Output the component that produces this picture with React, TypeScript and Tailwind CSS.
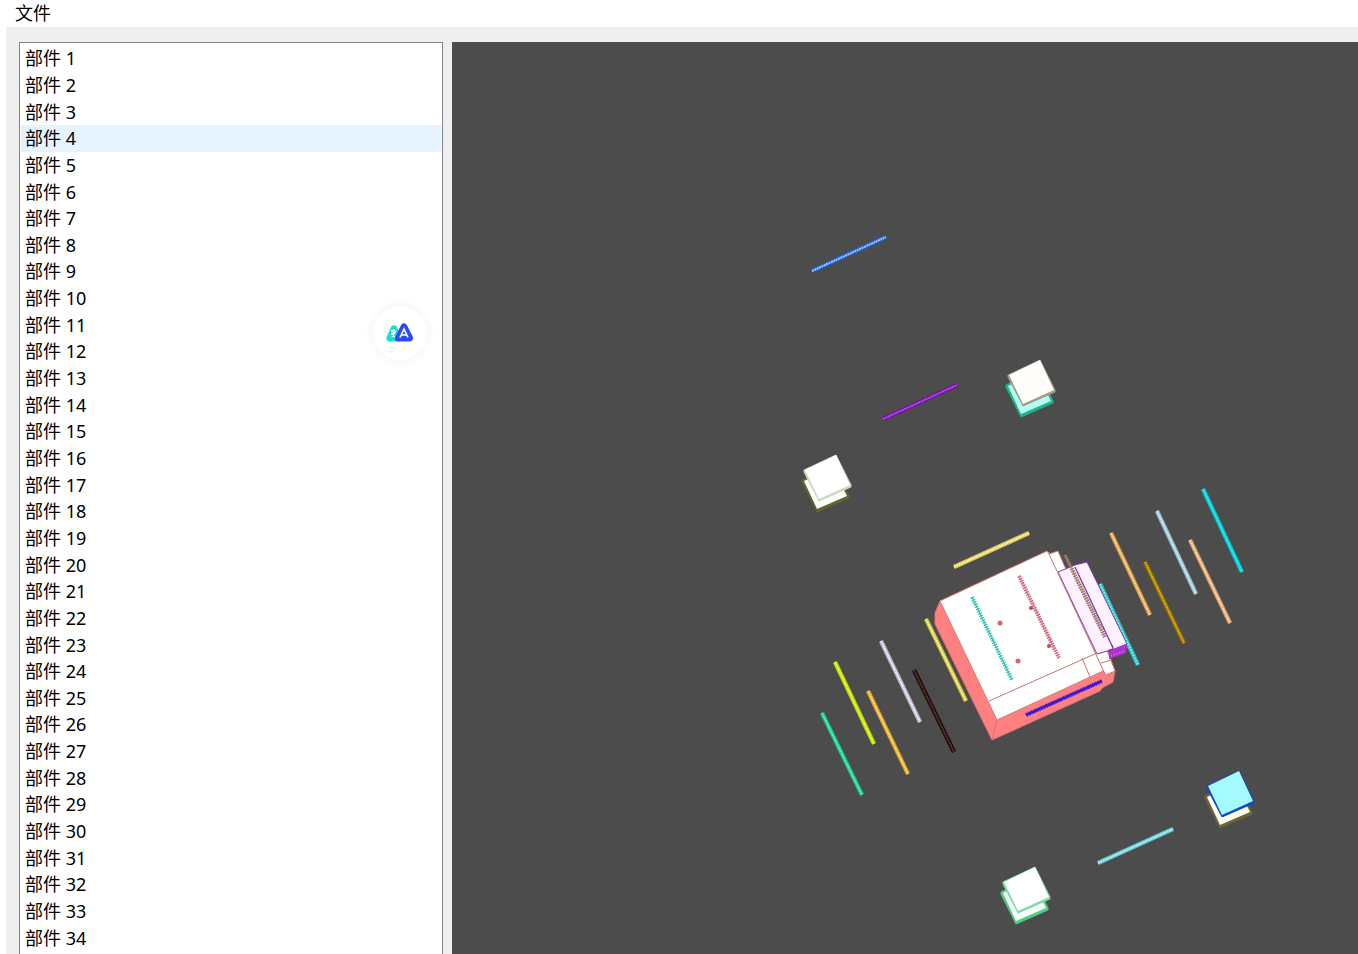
const parts = Array.from({ length: 34 }, (_, i) => `部件 ${i + 1}`);

// x1, y1, x2, y2, edge colour, inner colour
type RodData = [number, number, number, number, string, string];

const rods: RodData[] = [
  [812, 271, 886, 237, "#1f63d6", "#9cc9f5"],
  [883, 419, 957, 385, "#6d14a0", "#b94be6"],
  [954, 567, 1029, 533, "#d9c55c", "#f8f3a8"],
  [1098, 863, 1173, 829, "#5fc3cf", "#b0f2f5"],
  [926, 619, 966, 701, "#cdbb47", "#f7f491"],
  [881, 641, 920, 722, "#b9aec9", "#f1ecfa"],
  [914, 670, 954, 752, "#160806", "#5f352c"],
  [835, 662, 874, 744, "#b5d313", "#effa2f"],
  [868, 691, 908, 774, "#d79b32", "#ffdf62"],
  [822, 713, 862, 795, "#22ba87", "#48f7c2"],
  [1111, 533, 1150, 615, "#d69349", "#ffd88a"],
  [1145, 562, 1184, 643, "#8d6b05", "#e0ae16"],
  [1157, 511, 1196, 594, "#91bac9", "#cbeaf5"],
  [1190, 540, 1230, 623, "#d49768", "#ffdbae"],
  [1203, 489, 1242, 572, "#10bcc7", "#22f1fa"],
];

// x, y of the left corner, then top edge/fill and lower edge/fill
type BlockData = [number, number, string, string, string, string];

const blocks: BlockData[] = [
  [1008, 375, "#a29d87", "#fffdfb", "#20b58c", "#b3fff3"],
  [804, 470, "#cbd9c4", "#ffffff", "#62642b", "#fffffa"],
  [1207, 786, "#1047d2", "#a5fbff", "#686638", "#fffff0"],
  [1003, 882, "#83d9a6", "#ffffff", "#52ce84", "#f5fffa"],
];

function Rod({ rod }: { rod: RodData }) {
  const [x1, y1, x2, y2, edge, inner] = rod;
  const pos = { x1, y1, x2, y2 };
  return (
    <g>
      <line {...pos} stroke={edge} strokeWidth="4.4" />
      <line {...pos} stroke={inner} strokeWidth="2" strokeDasharray="2 0.6" />
    </g>
  );
}

function Block({ block }: { block: BlockData }) {
  const [x, y, topEdge, topFill, lowEdge, lowFill] = block;
  return (
    <g transform={`translate(${x} ${y})`} strokeLinejoin="round">
      <path d="M-2 10 L30 -5 L45 26 L45 28 L13 42 L12 40 L-2 12Z" fill={lowEdge} stroke={lowEdge} strokeWidth="1" />
      <path d="M0 11 L29 -3 L43 26 L13 39Z" fill={lowFill} />
      <path d="M0 0 L32 -15 L47 15 L47 17 L15 31 L0 2Z" fill={topEdge} stroke={topEdge} strokeWidth="1" />
      <path d="M1 0 L32 -15 L46 15 L15 29Z" fill={topFill} />
    </g>
  );
}

function Housing() {
  return (
    <g>
      <line x1="1100" y1="584" x2="1138" y2="665" stroke="#2cb9bb" strokeWidth="4.4" />
      <line x1="1100" y1="584" x2="1138" y2="665" stroke="#72f3ee" strokeWidth="2" strokeDasharray="2 1" />

      {/* body */}
      <path
        d="M940 601 L935 613 L935 624 L992 740 L1100 691 L1102 688 L1113 682 L1115 671 L1107 650 L1050 553 L1047 552Z"
        fill="#ff8080"
        stroke="#e07272"
        strokeWidth="1"
      />
      <path
        d="M940 601 L1047 551 L1049 554 L1058 551 L1064 565 L1107 650 L1115 671 L1106 675 L1103 671 L997 720Z"
        fill="#fff"
        stroke="#d77b78"
        strokeWidth="1"
      />
      <path d="M997 720 L992 740" stroke="#d96e6e" strokeWidth="1" />

      {/* side cover */}
      <path d="M1109 650 L1127 644 L1126 653 L1109 659Z" fill="#b530d2" />
      <path d="M1111 656 L1124 651" stroke="#efb4ff" strokeWidth="1" strokeDasharray="1 2" />
      <path
        d="M1058 572 L1075 565 L1087 562 L1127 644 L1114 649 L1097 654Z"
        fill="#fbf1ff"
        stroke="#8639ad"
        strokeWidth="1"
      />
      <path d="M1075 567 L1113 648" stroke="#7b359c" strokeWidth="1.3" />
      <path d="M1112 645 L1113 649 L1109 650" fill="none" stroke="#7b359c" strokeWidth="1" />

      {/* seams */}
      <g fill="none" stroke="#bd7772" strokeWidth="1">
        <path d="M1049 554 L1105 674" />
        <path d="M989 701 L1097 653" />
        <path d="M1082 658 L1090 677" />
        <path d="M1101 663 L1112 660" />
      </g>
      <path d="M1105 679 L1112 673" stroke="#b55353" strokeWidth="1" strokeDasharray="1 3" />

      {/* springs */}
      <g strokeWidth="4" strokeDasharray="1.5 1">
        <line x1="972" y1="597" x2="1012" y2="680" stroke="#3fc5b6" />
        <line x1="1019" y1="576" x2="1059" y2="658" stroke="#d3657e" />
        <line x1="1065" y1="555" x2="1105" y2="637" stroke="#946b5e" />
      </g>
      <g strokeWidth="1">
        <line x1="972" y1="597" x2="1012" y2="680" stroke="#2dbfae" />
        <line x1="1019" y1="576" x2="1059" y2="658" stroke="#d87f94" />
        <line x1="1065" y1="555" x2="1105" y2="637" stroke="#c4917e" />
      </g>
      <line x1="1026" y1="715" x2="1102" y2="681" stroke="#4c1fe0" strokeWidth="4" strokeDasharray="2 0.7" />
      <line x1="1026" y1="715" x2="1102" y2="681" stroke="#3b19c9" strokeWidth="2" />

      {/* holes */}
      <circle cx="1000" cy="623" r="2.5" fill="#d9646a" />
      <circle cx="1018" cy="661" r="2.5" fill="#d9646a" />
      <circle cx="1031" cy="608" r="2" fill="#c0485c" />
      <circle cx="1049" cy="646" r="2" fill="#c0485c" />
    </g>
  );
}

function Viewport() {
  return (
    <svg
      viewBox="452 42 906 912"
      preserveAspectRatio="xMinYMin slice"
      className="min-w-0 flex-1 bg-[#4c4c4c]"
      role="img"
    >
      {blocks.map((block, i) => (
        <Block key={i} block={block} />
      ))}
      {rods.map((rod, i) => (
        <Rod key={i} rod={rod} />
      ))}
      <Housing />
    </svg>
  );
}

function TranslateIcon() {
  return (
    <svg viewBox="0 0 28 20" className="h-5 w-7">
      <path d="M8 6 L12 15 L4 15Z" fill="#14e0d0" stroke="#14e0d0" strokeWidth="7" strokeLinejoin="round" />
      <path d="M5 8 L9 7 M5 11 L9 9 L6 14 M6 11 L9 14" fill="none" stroke="#fff" strokeWidth="1.3" />
      <path d="M18 4 L23.5 15 L12.5 15Z" fill="#2b48ff" stroke="#2b48ff" strokeWidth="7" strokeLinejoin="round" />
      <path d="M14 14.5 L18 6 L22 14.5 M15.5 12 H20.5" fill="none" stroke="#fff" strokeWidth="1.7" />
    </svg>
  );
}

export default function App() {
  return (
    <div className="flex min-h-screen flex-col bg-white font-['Noto_Sans','Noto_Sans_CJK_SC',sans-serif] text-[18px] text-black">
      <header className="flex h-[27px] items-start pl-[15px]">
        <button className="leading-[26px]">文件</button>
      </header>

      <main className="ml-1.5 flex flex-1 gap-[9px] bg-[#efefef] pt-[15px] pl-[13px]">
        <div className="relative flex w-[424px] shrink-0 flex-col border border-b-0 border-[#82858c] bg-white px-px pt-0.5 pb-[3px]">
          <ul className="grid flex-1 auto-rows-fr">
            {parts.map((part, i) => (
              <li
                key={part}
                className={`flex h-full items-center pl-1 leading-[26px] ${i === 3 ? "bg-[#e5f3ff]" : ""}`}
              >
                {part}
              </li>
            ))}
          </ul>
          <button
            aria-label="翻译"
            className="absolute top-[263px] right-[15px] flex size-[54px] items-center justify-center rounded-full bg-white shadow-[0_0_12px_rgba(0,0,0,0.06)]"
          >
            <TranslateIcon />
          </button>
        </div>
        <Viewport />
      </main>
    </div>
  );
}
